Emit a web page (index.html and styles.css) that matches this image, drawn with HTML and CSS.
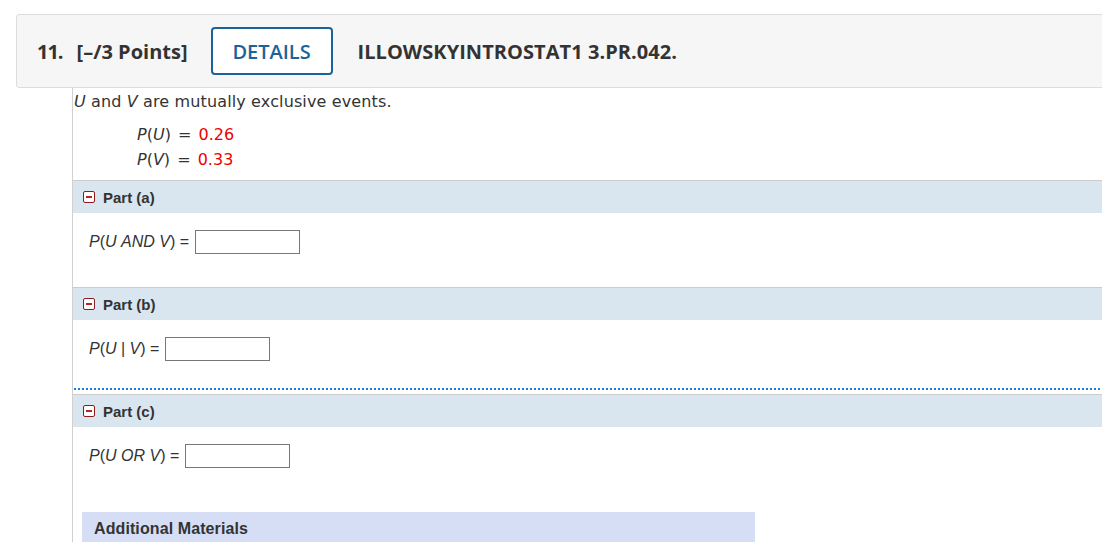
FILE: index.html
```html
<!DOCTYPE html>
<html>
<head>
<meta charset="utf-8">
<link rel="stylesheet" href="styles.css">
</head>
<body>
<div class="page">
  <div class="qhead">
    <span class="qnum">11.</span>
    <span class="qpts">[–/3 Points]</span>
    <button class="details">DETAILS</button>
    <span class="qref">ILLOWSKYINTROSTAT1 3.PR.042.</span>
  </div>
  <div class="qbody">
    <p class="intro"><i>U</i> and <i>V</i> are mutually exclusive events.</p>
    <div class="given">
      <div><i>P</i>(<i>U</i>) = <span class="red">0.26</span></div>
      <div><i>P</i>(<i>V</i>) = <span class="red">0.33</span></div>
    </div>

    <div class="part">
      <div class="phead"><span class="toggle"></span>Part (a)</div>
      <div class="pbody"><span class="expr"><i>P</i>(<i>U</i> <i>AND</i> <i>V</i>) =</span><input class="ans" type="text"></div>
    </div>
    <div class="part">
      <div class="phead"><span class="toggle"></span>Part (b)</div>
      <div class="pbody short"><span class="expr"><i>P</i>(<i>U</i> | <i>V</i>) =</span><input class="ans" type="text"></div>
    </div>
    <div class="divider"></div>
    <div class="part">
      <div class="phead"><span class="toggle"></span>Part (c)</div>
      <div class="pbody"><span class="expr"><i>P</i>(<i>U</i> <i>OR</i> <i>V</i>) =</span><input class="ans" type="text"></div>
    </div>
    <div class="addl">Additional Materials</div>
  </div>
</div>
</body>
</html>
```

FILE: styles.css
```css
html, body {
  margin: 0;
  padding: 0;
  background: #fff;
  overflow: hidden;
}
.page {
  padding: 14px 0 0 16px;
  width: 1140px;
}
.qhead {
  display: flex;
  align-items: center;
  height: 72px;
  background: #f6f6f6;
  border: 1px solid #dcdcdc;
  border-radius: 3px 0 0 3px;
  padding-left: 20px;
  font-family: "Open Sans", sans-serif;
  font-weight: 700;
  font-size: 20px;
  color: #333;
}
.qnum {
  margin-right: 14px;
  letter-spacing: -1px;
}
.qpts { margin-right: 23px; }
.details {
  width: 122px;
  height: 48px;
  border: 2px solid #1c6399;
  border-radius: 4px;
  background: #fff;
  color: #1c6399;
  font-family: "Open Sans", sans-serif;
  font-weight: 600;
  font-size: 20px;
  padding: 0;
  margin-right: 25px;
}
.qref { letter-spacing: 0.05px; }
.qbody {
  margin-left: 56px;
  border-left: 1px solid #d0d0d0;
  padding-top: 2px;
  font-family: Verdana, "DejaVu Sans", sans-serif;
  color: #333;
}
.intro {
  margin: 0 0 0 1px;
  font-size: 16px;
  line-height: 24px;
  letter-spacing: 0.13px;
}
.given {
  margin: 8px 0 0 64px;
  font-size: 16px;
  line-height: 25px;
  word-spacing: 2px;
  padding-bottom: 8px;
}
.red { color: #e00; }
.part {
  border-top: 1px solid #ccc;
}
.phead {
  display: flex;
  align-items: center;
  height: 32px;
  background: #d9e5ef;
  padding-left: 10px;
  font-family: "Liberation Sans", Arial, sans-serif;
  font-weight: 700;
  font-size: 15px;
  color: #333;
}
.toggle {
  position: relative;
  width: 10px;
  height: 10px;
  border: 1px solid #8f1c1c;
  border-radius: 2px;
  background: #fff;
  margin-right: 8px;
  box-sizing: content-box;
}
.toggle::after {
  content: "";
  position: absolute;
  left: 2px;
  top: 4px;
  width: 6px;
  height: 2px;
  background: #b22;
}
.pbody {
  display: flex;
  height: 74px;
  padding: 17px 0 0 16px;
  box-sizing: border-box;
  align-items: flex-start;
  font-family: "Liberation Sans", Arial, sans-serif;
  font-size: 16px;
  line-height: 24px;
  color: #333;
}
.pbody.short {
  height: 68px;
}
.expr { margin-right: 6px; }
.ans {
  width: 105px;
  height: 24px;
  box-sizing: border-box;
  border: 1px solid #777;
  margin: 0;
  padding: 0;
}
.divider {
  border-top: 2px dotted #1a7ee0;
  margin-left: 1px;
  margin-bottom: 4px;
}
.addl {
  margin: 11px 0 0 9px;
  width: 661px;
  height: 30px;
  padding: 2px 0 0 12px;
  background: #d6def6;
  font-family: "Liberation Sans", Arial, sans-serif;
  font-weight: 700;
  font-size: 16px;
  letter-spacing: 0.1px;
  line-height: 30px;
  color: #333;
}
```
